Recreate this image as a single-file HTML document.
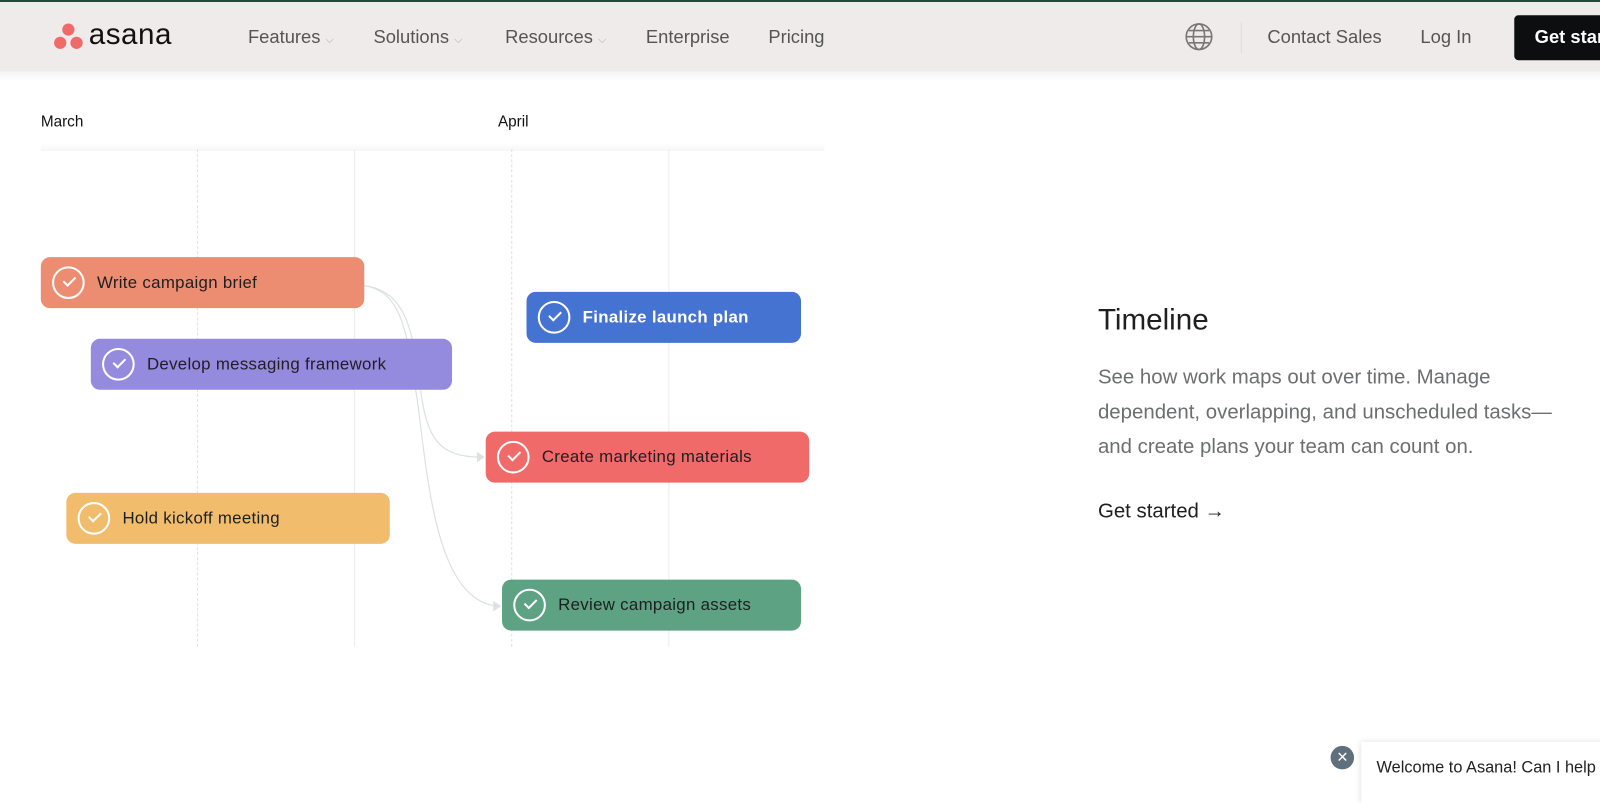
<!DOCTYPE html>
<html><head><meta charset="utf-8"><style>
*{margin:0;padding:0;box-sizing:border-box}
body{width:1600px;height:771px;overflow:hidden;background:#fff;font-family:"Liberation Sans",sans-serif;position:relative}
#w{position:absolute;left:0;top:0;width:1568px;height:756px;transform:scale(1.0204);transform-origin:0 0}
.top{position:absolute;left:0;top:0;width:1600px;height:2px;background:#1e4a3a}
.nav{position:absolute;left:0;top:2px;width:1600px;height:68px;background:#efebea}
.nav span{position:absolute;top:24px;font-size:18px;color:#555;white-space:nowrap}
.shadow{position:absolute;left:0;top:70px;width:1600px;height:10px;background:linear-gradient(#f4f4f4,#fff)}
.m{position:absolute;top:111px;font-size:15px;color:#111}
.gridtop{position:absolute;left:40px;top:140px;width:768px;height:8px;background:linear-gradient(#fff,#f6f6f6)}
.vl{position:absolute;top:146px;height:488px;width:0}
.d{border-left:1px dashed #e2e2e2}.s{border-left:1px solid #ececec}
.t{position:absolute;height:50px;border-radius:9px;font-size:16.5px;color:#1e1f21;display:flex;align-items:center;padding-left:11px;white-space:nowrap;letter-spacing:0.3px}
.t i{width:32px;height:32px;border:2px solid #fff;border-radius:50%;margin-right:12px;position:relative;flex:none}
.t i:after{content:"";position:absolute;left:9px;top:8px;width:10px;height:5px;border-left:2px solid #fff;border-bottom:2px solid #fff;transform:rotate(-45deg)}
</style></head><body><div id="w">
<div class="top"></div>
<div class="nav">
<svg style="position:absolute;left:52px;top:20px" width="30" height="28"><circle cx="15" cy="7" r="6" fill="#f06a6a"/><circle cx="7" cy="20" r="6" fill="#f06a6a"/><circle cx="23" cy="20" r="6" fill="#f06a6a"/></svg>
<span style="left:87px;top:16px;font-size:29px;color:#111;letter-spacing:0.5px">asana</span>
<span style="left:243px">Features <small style="font-size:11px;color:#aaa">⌵</small></span>
<span style="left:366px">Solutions <small style="font-size:11px;color:#aaa">⌵</small></span>
<span style="left:495px">Resources <small style="font-size:11px;color:#aaa">⌵</small></span>
<span style="left:633px">Enterprise</span>
<span style="left:753px">Pricing</span>
<svg style="position:absolute;left:1161px;top:20px" width="28" height="28" fill="none" stroke="#777" stroke-width="1.6"><circle cx="14" cy="14" r="12.5"/><ellipse cx="14" cy="14" rx="5.5" ry="12.5"/><line x1="1.5" y1="14" x2="26.5" y2="14"/><line x1="4" y1="8" x2="24" y2="8"/><line x1="4" y1="20" x2="24" y2="20"/></svg>
<div style="position:absolute;left:1216px;top:20px;width:1px;height:30px;background:#ddd"></div>
<span style="left:1242px">Contact Sales</span>
<span style="left:1392px">Log In</span>
<div style="position:absolute;left:1484px;top:13px;width:130px;height:44px;background:#0d0e10;border-radius:4px;color:#fff;font-size:18px;font-weight:bold;padding:11px 20px;white-space:nowrap">Get started</div>
</div>
<div class="shadow"></div>
<div class="m" style="left:40px">March</div><div class="m" style="left:488px">April</div>
<div class="gridtop"></div>
<div class="vl d" style="left:193px"></div><div class="vl s" style="left:347px"></div>
<div class="vl d" style="left:501px"></div><div class="vl s" style="left:655px"></div>
<svg style="position:absolute;left:0;top:0" width="820" height="640" fill="none" stroke="#dde1e4" stroke-width="1.2">
<path d="M357 280 C400 285 405 330 412 380 C418 430 430 448 472 448"/>
<path d="M357 280 C395 285 400 330 410 400 C420 480 430 590 488 594"/>
<path d="M468 444 l6 4 -6 4z M484 590 l6 4 -6 4z" fill="#dde1e4"/>
</svg>
<div class="t" style="left:40px;top:252px;width:317px;background:#ec8d71"><i></i>Write campaign brief</div>
<div class="t" style="left:89px;top:332px;width:354px;background:#948bdf"><i></i>Develop messaging framework</div>
<div class="t" style="left:65px;top:483px;width:317px;background:#f1bd6c"><i></i>Hold kickoff meeting</div>
<div class="t" style="left:516px;top:286px;width:269px;background:#4573d2;color:#fff;font-weight:bold"><i></i>Finalize launch plan</div>
<div class="t" style="left:476px;top:423px;width:317px;background:#f06a6a"><i></i>Create marketing materials</div>
<div class="t" style="left:492px;top:568px;width:293px;background:#5da283"><i></i>Review campaign assets</div>
<div style="position:absolute;left:1076px;top:298px;font-size:29px;color:#1e1f21">Timeline</div>
<div style="position:absolute;left:1076px;top:353px;width:474px;font-size:20px;line-height:34px;color:#6d6e6f">See how work maps out over time. Manage dependent, overlapping, and unscheduled tasks—and create plans your team can count on.</div>
<div style="position:absolute;left:1076px;top:490px;font-size:20px;color:#1e1f21">Get started →</div>
<div style="position:absolute;left:1304px;top:731px;width:23px;height:23px;border-radius:50%;background:#5f6f7b;color:#fff;font-size:14px;text-align:center;line-height:23px">✕</div>
<div style="position:absolute;left:1334px;top:727px;width:270px;height:60px;background:#fff;box-shadow:0 0 6px rgba(0,0,0,.15)"></div>
<div style="position:absolute;left:1349px;top:744px;font-size:16px;color:#222;white-space:nowrap">Welcome to Asana! Can I help</div>
</div></body></html>
